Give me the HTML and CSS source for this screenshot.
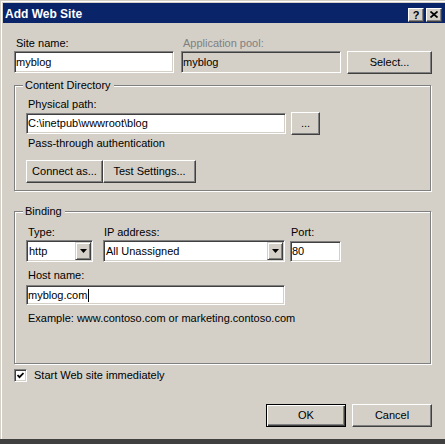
FILE: index.html
```html
<!DOCTYPE html>
<html lang="en">
  <head>
    <meta charset="UTF-8" />
    <meta name="viewport" content="width=device-width, initial-scale=1.0" />
    <title>Add Web Site</title>
    <link rel="stylesheet" href="styles.css">
  </head>
  <body>
    <div class="window">
      <div class="titlebar">
        <span class="title">Add Web Site</span>
        <div class="title-buttons">
          <span class="tbtn help">?</span>
          <span class="tbtn">
            <svg width="8" height="7" viewBox="0 0 8 7">
              <path d="M0.5 0.5 L7.5 6.5 M7.5 0.5 L0.5 6.5" stroke="#000" stroke-width="1.7" fill="none" />
            </svg>
          </span>
        </div>
      </div>

      <div class="body">
        <div class="site-row">
          <label class="lbl">Site name:</label>
          <label class="lbl disabled">Application pool:</label>
          <span></span>
          <div class="field w160">myblog</div>
          <div class="field w160 readonly">myblog</div>
          <button class="btn select-btn">Select...</button>
        </div>

        <fieldset class="group content-dir">
          <legend>Content Directory</legend>
          <div class="lbl">Physical path:</div>
          <div class="path-row">
            <div class="field path">C:\inetpub\wwwroot\blog</div>
            <button class="btn dots">...</button>
          </div>
          <div class="lbl note">Pass-through authentication</div>
          <div class="btn-pair">
            <button class="btn connect">Connect as...</button>
            <button class="btn test">Test Settings...</button>
          </div>
        </fieldset>

        <fieldset class="group binding">
          <legend>Binding</legend>
          <div class="bind-grid">
            <div class="lbl">Type:</div>
            <div class="lbl ip-lbl">IP address:</div>
            <div class="lbl port-lbl">Port:</div>
            <div class="field select type">
              <span class="val">http</span>
              <span class="arrow"><svg width="7" height="4" viewBox="0 0 7 4"><path d="M0 0h7L3.5 4z" /></svg></span>
            </div>
            <div class="field select ip">
              <span class="val">All Unassigned</span>
              <span class="arrow"><svg width="7" height="4" viewBox="0 0 7 4"><path d="M0 0h7L3.5 4z" /></svg></span>
            </div>
            <div class="field port">80</div>
          </div>
          <div class="lbl host-lbl">Host name:</div>
          <div class="field host">myblog.com<span class="caret"></span></div>
          <div class="lbl example">Example: www.contoso.com or marketing.contoso.com</div>
        </fieldset>

        <label class="check-row">
          <span class="checkbox">
            <svg width="7" height="7" viewBox="0 0 7 7">
              <path d="M0.5 3 L2.5 5.2 L6.5 1" stroke="#000" stroke-width="1.8" fill="none" />
            </svg>
          </span>
          Start Web site immediately
        </label>

        <div class="actions">
          <button class="btn default">OK</button>
          <button class="btn">Cancel</button>
        </div>
      </div>
    </div>
  </body>
</html>
```

FILE: styles.css
```css
body {
  margin: 0;
  background: #404040;
  font-family: "Liberation Sans", Arial, sans-serif;
  font-size: 11px;
  line-height: 13px;
  color: #000;
  overflow: hidden;
}

.window {
  width: 445px;
  height: 439px;
  box-sizing: border-box;
  background: #d4d0c8;
  border-top: 1px solid #d4d0c8;
  border-left: 1px solid #d4d0c8;
  box-shadow: inset 1px 1px #fff;
  padding: 2px 0 0 2px;
}

.titlebar {
  height: 20px;
  background: #0a246a;
  display: flex;
  justify-content: space-between;
  padding: 0 3px 0 2px;
}

.title {
  color: #fff;
  font-weight: bold;
  font-size: 12px;
  line-height: 14px;
  padding-top: 4px;
}

.title-buttons {
  display: flex;
  gap: 2px;
  padding-top: 5px;
}

.tbtn {
  width: 16px;
  height: 14px;
  box-sizing: border-box;
  background: #d4d0c8;
  border: 1px solid;
  border-color: #fff #404040 #404040 #fff;
  box-shadow: inset -1px -1px #808080;
  display: flex;
  align-items: center;
  justify-content: center;
  font-weight: bold;
  font-size: 11px;
}

.tbtn svg {
  margin-top: -1px;
}

.body {
  padding: 14px 0 0 11px;
  width: 418px;
}

.lbl {
  display: block;
  padding-left: 2px;
}

.lbl.disabled {
  color: #808080;
}

.site-row {
  display: grid;
  grid-template-columns: 167px 166px 85px;
  row-gap: 1px;
}

.field {
  height: 22px;
  box-sizing: border-box;
  background: #fff;
  border: 1px solid;
  border-color: #808080 #fff #fff #808080;
  box-shadow: inset 1px 1px #404040, inset -1px -1px #d4d0c8;
  padding: 0 0 0 1px;
  display: flex;
  align-items: center;
  white-space: nowrap;
}

.w160 {
  width: 160px;
}

.field.readonly {
  background: #d4d0c8;
}

.btn {
  height: 23px;
  box-sizing: border-box;
  background: #d4d0c8;
  border: 1px solid;
  border-color: #fff #404040 #404040 #fff;
  box-shadow: inset -1px -1px #808080;
  font: inherit;
  color: #000;
  padding: 0;
}

.select-btn {
  width: 85px;
}

.group {
  margin: 5px 0 0;
  width: 417px;
  box-sizing: border-box;
  border: 1px solid #808080;
  box-shadow: 1px 1px #fff, inset 1px 1px #fff;
  padding: 6px 11px 7px 11px;
  min-width: 0;
}

.group legend {
  margin-left: -3px;
  padding: 0 3px 0 2px;
  background: #d4d0c8;
}

.path-row {
  display: flex;
  align-items: center;
  gap: 5px;
  margin-top: 1px;
}

.field.path {
  width: 260px;
  height: 21px;
}

.dots {
  width: 29px;
}

.note {
  margin-top: 2px;
}

.btn-pair {
  display: flex;
  margin-top: 10px;
}

.connect {
  width: 77px;
}

.test {
  width: 93px;
}

.binding {
  margin-top: 14px;
  padding-top: 8px;
  padding-bottom: 38px;
}

.bind-grid {
  display: grid;
  grid-template-columns: 77px 187px 51px;
  row-gap: 1px;
}

.ip-lbl {
  padding-left: 1px;
}

.port-lbl {
  padding-left: 1px;
}

.field.select {
  padding: 1px;
  justify-content: space-between;
}

.select .val {
  padding-left: 1px;
}

.field.type {
  width: 67px;
}

.field.ip {
  width: 182px;
}

.field.port {
  width: 51px;
  height: 21px;
  margin-top: 1px;
}

.arrow {
  width: 16px;
  height: 18px;
  box-sizing: border-box;
  background: #d4d0c8;
  border: 1px solid;
  border-color: #d4d0c8 #404040 #404040 #d4d0c8;
  box-shadow: inset 1px 1px #fff, inset -1px -1px #808080;
  display: flex;
  align-items: center;
  justify-content: center;
}

.host-lbl {
  margin-top: 7px;
}

.field.host {
  width: 259px;
  height: 20px;
  margin-top: 3px;
}

.caret {
  display: inline-block;
  width: 1px;
  height: 13px;
  background: #000;
  margin-left: 1px;
}

.example {
  margin-top: 7px;
}

.check-row {
  display: flex;
  align-items: center;
  gap: 7px;
  margin-top: 5px;
}

.checkbox {
  width: 13px;
  height: 13px;
  box-sizing: border-box;
  background: #fff;
  border: 1px solid;
  border-color: #808080 #fff #fff #808080;
  box-shadow: inset 1px 1px #404040, inset -1px -1px #d4d0c8;
  display: flex;
  align-items: center;
  justify-content: center;
}

.actions {
  display: flex;
  justify-content: flex-end;
  gap: 6px;
  margin-top: 22px;
}

.actions .btn {
  width: 80px;
}

.btn.default {
  border: 1px solid #000;
  box-shadow: inset 1px 1px #fff, inset -1px -1px #404040, inset -2px -2px #808080;
}
```
